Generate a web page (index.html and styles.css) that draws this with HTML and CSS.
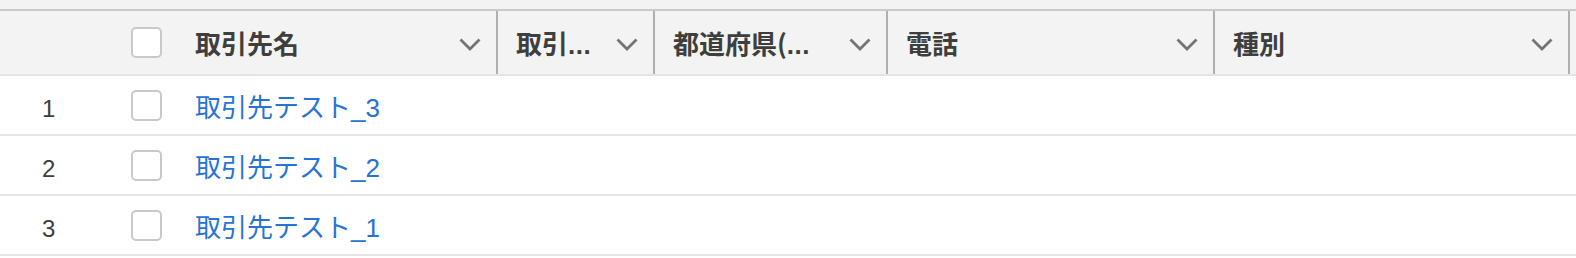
FILE: index.html
```html
<!DOCTYPE html>
<html lang="ja">
<head>
<meta charset="utf-8">
<title>取引先</title>
<link rel="stylesheet" href="styles.css">
</head>
<body>
<div class="table">
  <div class="top-strip"></div>
  <div class="head-row">
    <div class="cell num"></div>
    <div class="cell check"><span class="checkbox"></span></div>
    <div class="th w-name"><span class="label">取引先名</span><svg class="chev" viewBox="0 0 22 13"><path d="M1.5 1.5 L11 11 L20.5 1.5"/></svg></div>
    <div class="th w-no"><span class="label">取引<span class="dots">...</span></span><svg class="chev" viewBox="0 0 22 13"><path d="M1.5 1.5 L11 11 L20.5 1.5"/></svg></div>
    <div class="th w-pref"><span class="label">都道府県(<span class="dots">...</span></span><svg class="chev" viewBox="0 0 22 13"><path d="M1.5 1.5 L11 11 L20.5 1.5"/></svg></div>
    <div class="th w-tel"><span class="label">電話</span><svg class="chev" viewBox="0 0 22 13"><path d="M1.5 1.5 L11 11 L20.5 1.5"/></svg></div>
    <div class="th w-type"><span class="label">種別</span><svg class="chev" viewBox="0 0 22 13"><path d="M1.5 1.5 L11 11 L20.5 1.5"/></svg></div>
    <div class="cell filler"></div>
  </div>
  <div class="row">
    <div class="cell num">1</div>
    <div class="cell check"><span class="checkbox"></span></div>
    <div class="cell td"><a class="link" href="#">取引先テスト_3</a></div>
  </div>
  <div class="row">
    <div class="cell num">2</div>
    <div class="cell check"><span class="checkbox"></span></div>
    <div class="cell td"><a class="link" href="#">取引先テスト_2</a></div>
  </div>
  <div class="row">
    <div class="cell num">3</div>
    <div class="cell check"><span class="checkbox"></span></div>
    <div class="cell td"><a class="link" href="#">取引先テスト_1</a></div>
  </div>
</div>
</body>
</html>
```
FILE: styles.css
```css
* { box-sizing: border-box; }
html, body {
  margin: 0;
  padding: 0;
  background: #ffffff;
}
body {
  font-family: "Liberation Sans", "Noto Sans CJK JP", sans-serif;
  color: #3e3e3c;
  width: 1576px;
  height: 258px;
  overflow: hidden;
}
.table {
  display: flex;
  flex-direction: column;
}
.top-strip {
  height: 9px;
  background: #f3f3f3;
}
.head-row {
  display: flex;
  height: 67px;
  background: #f3f3f3;
  border-top: 2px solid #c9c9c9;
  border-bottom: 2px solid #e5e5e5;
}
.row {
  display: flex;
  height: 60px;
  border-bottom: 2px solid #e5e5e5;
  background: #ffffff;
}
.cell {
  display: flex;
  align-items: center;
}
.num {
  width: 116px;
  flex: none;
  padding-left: 42px;
  padding-top: 7px;
  font-size: 24px;
  color: #3e3e3c;
}
.check {
  width: 61px;
  flex: none;
  justify-content: center;
}
.checkbox {
  display: block;
  width: 31px;
  height: 31px;
  background: #ffffff;
  border: 2px solid #c9c9c9;
  border-radius: 5px;
}
.th {
  display: flex;
  align-items: center;
  flex: none;
  padding: 0 15px 0 18px;
  border-right: 2px solid #b0b0b0;
}
.label {
  flex: 1;
  font-family: "Noto Sans CJK JP", "Liberation Sans", sans-serif;
  font-size: 26px;
  font-weight: 700;
  color: #3e3e3c;
  white-space: nowrap;
}
.dots {
  font-family: "Liberation Sans", sans-serif;
  font-weight: 700;
  letter-spacing: 0.5px;
}
.chev {
  width: 22px;
  height: 13px;
  flex: none;
  margin-top: 3px;
}
.chev path {
  fill: none;
  stroke: #747474;
  stroke-width: 2.8;
}
.w-name { width: 321px; }
.w-no { width: 157px; }
.w-pref { width: 233px; }
.w-tel { width: 327px; }
.w-type { width: 355px; }
.filler { flex: 1; }
.td {
  padding-left: 18px;
}
.link {
  font-size: 26px;
  color: #2574d4;
  text-decoration: none;
  white-space: nowrap;
}
```
